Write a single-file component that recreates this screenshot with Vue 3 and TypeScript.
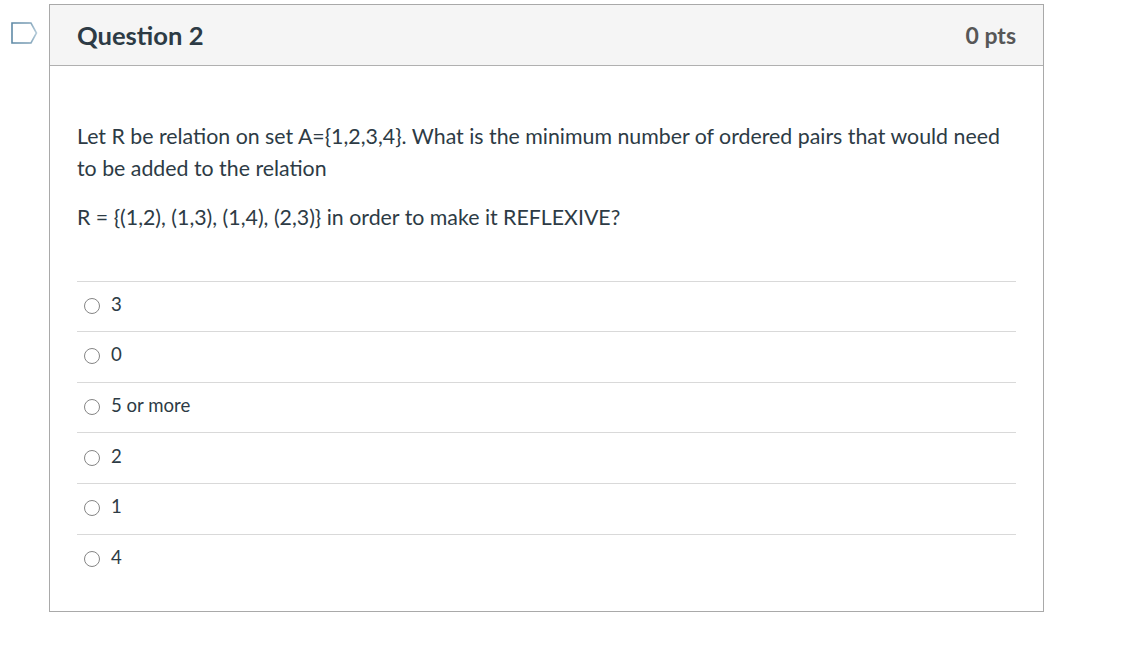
<script setup lang="ts">
const answers: string[] = ['3', '0', '5 or more', '2', '1', '4']
</script>

<template>
  <div class="page">
    <svg class="flag" width="28" height="24" viewBox="0 0 28 24">
      <defs>
        <linearGradient id="flagStroke" x1="0" y1="0" x2="1" y2="0">
          <stop offset="0" stop-color="#5f8aa6" />
          <stop offset="0.7" stop-color="#7c9fb6" />
          <stop offset="1" stop-color="#b4cbd9" />
        </linearGradient>
      </defs>
      <path d="M2 2 H21 L26.5 12 L21 22 H2 Z" fill="#fff" stroke="url(#flagStroke)" stroke-width="1.6" />
    </svg>
    <section class="card">
      <header class="head">
        <h2 class="title">Question 2</h2>
        <span class="pts">0 pts</span>
      </header>
      <div class="body">
        <p class="text first">Let R be relation on set A={1,2,3,4}. What is the minimum number of ordered pairs that would need to be added to the relation</p>
        <p class="text second">R = {(1,2), (1,3), (1,4), (2,3)} in order to make it REFLEXIVE?</p>
        <ul class="answers">
          <li v-for="a in answers" :key="a" class="answer">
            <span class="radio"></span>
            <span class="label">{{ a }}</span>
          </li>
        </ul>
      </div>
    </section>
  </div>
</template>

<style>
html, body { margin: 0; background: #fff; }
</style>

<style scoped>
.page {
  width: 1122px;
  height: 660px;
  position: relative;
  box-sizing: border-box;
  padding: 4px 0 0 49px;
  font-family: Lato, "Liberation Sans", sans-serif;
  color: #2d3b45;
  overflow: hidden;
}
.flag { position: absolute; left: 10px; top: 21px; }
.card {
  width: 995px;
  height: 608px;
  box-sizing: border-box;
  border: 1px solid #a9a9a9;
}
.head {
  height: 61px;
  box-sizing: border-box;
  background: #f5f5f5;
  border-bottom: 1px solid #b0b0b0;
  display: flex;
  align-items: center;
  justify-content: space-between;
  padding: 0 27px;
}
.title { margin: 0 0 1px; font-size: 25.6px; font-weight: 700; }
.pts { font-size: 23px; font-weight: 700; color: #575757; }
.body { padding: 54px 27px 0; }
.text { margin: 0; font-size: 21.34px; line-height: 32px; }
.second { margin-top: 17px; }
.answers { list-style: none; margin: 47.6px 0 0; padding: 0; }
.answer {
  height: 50.6px;
  box-sizing: border-box;
  border-top: 1px solid #d9d9d9;
  display: flex;
  align-items: center;
  padding: 0 0 2px 7px;
  font-size: 18.6px;
}
.radio {
  width: 16px;
  height: 16px;
  box-sizing: border-box;
  border: 1.5px solid #858585;
  border-radius: 50%;
  margin-right: 11px;
  margin-top: 1px;
}
.label { margin-top: -3px; }
</style>
